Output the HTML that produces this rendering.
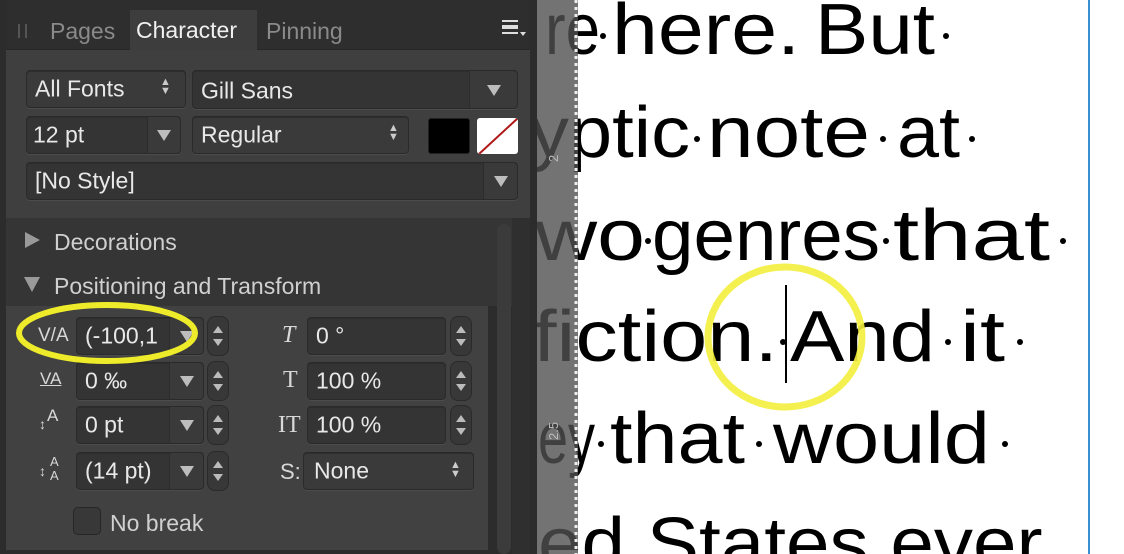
<!DOCTYPE html>
<html><head><meta charset="utf-8"><style>
*{box-sizing:border-box;margin:0;padding:0}
body{width:1124px;height:554px;overflow:hidden;background:#fff;position:relative;font-family:"Liberation Sans",sans-serif}
.a{position:absolute}
.panel{left:0;top:0;width:537px;height:554px;background:#2c2c2c}
.fld{position:absolute;background:#343434;border:1px solid #2a2a2a;border-radius:4px;color:#e8e8e8;font-size:23px;box-shadow:inset 0 1px 0 #2d2d2d,0 1px 0 #4c4c4c}
.fld span{position:absolute;left:8px;top:50%;transform:translateY(-50%)}
.sep{position:absolute;top:0;bottom:0;border-left:1px solid #2c2c2c;background:#3a3a3a;border-radius:0 4px 4px 0;right:0}
.tri{position:absolute;width:0;height:0;border-left:7px solid transparent;border-right:7px solid transparent;border-top:11px solid #bdbdbd}
.stp{position:absolute;width:22px;height:40px;border:1px solid #2a2a2a;border-radius:8px;background:#383838}
.stp:before{content:"";position:absolute;left:5px;top:9px;border-left:5px solid transparent;border-right:5px solid transparent;border-bottom:7px solid #bbb}
.stp:after{content:"";position:absolute;left:5px;bottom:9px;border-left:5px solid transparent;border-right:5px solid transparent;border-top:7px solid #bbb}
.ud{position:absolute;color:#ccc;font-size:11px;line-height:9px;text-align:center}
.lbl{position:absolute;color:#d0d0d0;font-size:23px}
.ic{position:absolute;color:#d8d8d8;font-family:"Liberation Serif",serif}
</style></head><body>
<svg class="a" style="left:0;top:0" width="1124" height="554">
<g font-family="Liberation Sans" font-size="72" fill="#000">
<text x="545" y="54" textLength="55" lengthAdjust="spacingAndGlyphs">re</text>
<text x="612" y="54" textLength="188" lengthAdjust="spacingAndGlyphs">here.</text>
<text x="815" y="54" textLength="120" lengthAdjust="spacingAndGlyphs">But</text>
<text x="530" y="157" textLength="160" lengthAdjust="spacingAndGlyphs">yptic</text>
<text x="707" y="157" textLength="163" lengthAdjust="spacingAndGlyphs">note</text>
<text x="897" y="157" textLength="63" lengthAdjust="spacingAndGlyphs">at</text>
<text x="535" y="260" textLength="110" lengthAdjust="spacingAndGlyphs">wo</text>
<text x="652" y="260" textLength="228" lengthAdjust="spacingAndGlyphs">genres</text>
<text x="893" y="260" textLength="157" lengthAdjust="spacingAndGlyphs">that</text>
<text x="533" y="361" textLength="245" lengthAdjust="spacingAndGlyphs">fiction.</text>
<text x="790" y="361" textLength="145" lengthAdjust="spacingAndGlyphs">And</text>
<text x="960" y="361" textLength="45" lengthAdjust="spacingAndGlyphs">it</text>
<text x="538" y="463" textLength="57" lengthAdjust="spacingAndGlyphs">ey</text>
<text x="610" y="463" textLength="135" lengthAdjust="spacingAndGlyphs">that</text>
<text x="773" y="463" textLength="217" lengthAdjust="spacingAndGlyphs">would</text>
<text x="538" y="568" textLength="522" lengthAdjust="spacingAndGlyphs">ed.States.ever.</text>
</g>
<g fill="#000"><circle cx="603" cy="36" r="3"/><circle cx="946" cy="36" r="3"/><circle cx="697" cy="139" r="3"/><circle cx="883" cy="139" r="3"/><circle cx="972" cy="139" r="3"/><circle cx="648" cy="241" r="3"/><circle cx="886" cy="241" r="3"/><circle cx="1063" cy="241" r="3"/><circle cx="783" cy="342" r="3"/><circle cx="948" cy="342" r="3"/><circle cx="1020" cy="342" r="3"/><circle cx="601" cy="444" r="3"/><circle cx="759" cy="444" r="3"/><circle cx="1005" cy="444" r="3"/></g>
<rect x="785" y="285" width="2" height="98" fill="#000"/>
<ellipse cx="785" cy="337" rx="77" ry="70" fill="none" stroke="#f2ee3c" stroke-width="7" opacity=".9"/>
<rect x="1088" y="0" width="2" height="554" fill="#3a8fd0"/>
<rect x="537" y="0" width="41" height="554" fill="rgba(80,80,80,.8)"/>
<line x1="576" y1="0" x2="576" y2="554" stroke="#eee" stroke-width="3" stroke-dasharray="3 4"/>
<text x="558" y="162" font-size="13" fill="#bbb" transform="rotate(-90 558 162)">2</text>
<text x="558" y="440" font-size="13" fill="#bbb" transform="rotate(-90 558 440)">2.5</text>
</svg>
<div class="a panel">
 <div class="a" style="left:6px;top:0;width:524px;height:50px;background:#2e2e2e;border-bottom:1px solid #262626"></div>
 <div class="a" style="left:18px;top:24px;width:2px;height:14px;background:#555"></div>
 <div class="a" style="left:25px;top:24px;width:2px;height:14px;background:#555"></div>
 <div class="a" style="left:130px;top:10px;width:127px;height:41px;background:#3d3d3d"></div>
 <div class="lbl" style="left:50px;top:18px;color:#8a8a8a">Pages</div>
 <div class="lbl" style="left:136px;top:17px;color:#f0f0f0">Character</div>
 <div class="lbl" style="left:266px;top:18px;color:#8a8a8a">Pinning</div>
 <div class="a" style="left:502px;top:20px;width:16px;height:14px;border-top:2px solid #ddd;border-bottom:2px solid #ddd"></div>
 <div class="a" style="left:502px;top:25px;width:16px;height:4px;border-top:2px solid #ddd;border-bottom:2px solid #ddd"></div>
 <div class="a" style="left:520px;top:32px;border-left:3px solid transparent;border-right:3px solid transparent;border-top:4px solid #ddd"></div>
 <div class="a" style="left:6px;top:50px;width:524px;height:168px;background:#3f3f3f"></div>
 <div class="fld" style="left:26px;top:70px;width:160px;height:38px;background:#3a3a3a"><span>All Fonts</span></div>
 <div class="ud" style="left:160px;top:78px">▲<br>▼</div>
 <div class="fld" style="left:192px;top:70px;width:326px;height:39px"><span style="top:55%">Gill Sans</span><div class="sep" style="width:48px"><div class="tri" style="left:17px;top:14px"></div></div></div>
 <div class="fld" style="left:26px;top:116px;width:155px;height:38px"><span style="left:6px">12 pt</span><div class="sep" style="width:33px"><div class="tri" style="left:9px;top:13px"></div></div></div>
 <div class="fld" style="left:192px;top:116px;width:217px;height:38px;background:#3a3a3a"><span>Regular</span></div>
 <div class="ud" style="left:388px;top:124px">▲<br>▼</div>
 <div class="a" style="left:428px;top:118px;width:42px;height:36px;background:#000;border:1px solid #222;border-radius:3px"></div>
 <div class="a" style="left:477px;top:118px;width:41px;height:36px;border-radius:3px;overflow:hidden;background:#fff"><svg width="41" height="36"><line x1="2" y1="36" x2="41" y2="0" stroke="#b01818" stroke-width="2"/></svg></div>
 <div class="fld" style="left:26px;top:162px;width:492px;height:38px"><span>[No Style]</span><div class="sep" style="width:34px"><div class="tri" style="left:10px;top:13px"></div></div></div>
 <div class="a" style="left:6px;top:218px;width:524px;height:88px;background:#353535"></div>
 <div class="a" style="left:25px;top:232px;border-top:8px solid transparent;border-bottom:8px solid transparent;border-left:15px solid #9a9a9a"></div>
 <div class="lbl" style="left:54px;top:229px">Decorations</div>
 <div class="a" style="left:24px;top:277px;border-left:8px solid transparent;border-right:8px solid transparent;border-top:15px solid #9a9a9a"></div>
 <div class="lbl" style="left:54px;top:273px">Positioning and Transform</div>
 <div class="a" style="left:6px;top:306px;width:482px;height:244px;background:#414141"></div>
 <div class="a" style="left:497px;top:224px;width:14px;height:330px;background:#3b3b3b;border-radius:7px"></div>
 <div class="a" style="left:512px;top:218px;width:18px;height:336px;background:#2f2f2f"></div>

 <div class="fld" style="left:76px;top:317px;width:128px;height:38px"><span>(-100,1</span><div class="sep" style="width:34px"><div class="tri" style="left:10px;top:13px"></div></div></div>
 <div class="stp" style="left:207px;top:316px"></div>
 <div class="fld" style="left:76px;top:362px;width:128px;height:38px"><span>0 ‰</span><div class="sep" style="width:34px"><div class="tri" style="left:10px;top:13px"></div></div></div>
 <div class="stp" style="left:207px;top:361px"></div>
 <div class="fld" style="left:76px;top:406px;width:128px;height:38px"><span>0 pt</span><div class="sep" style="width:34px"><div class="tri" style="left:10px;top:13px"></div></div></div>
 <div class="stp" style="left:207px;top:405px"></div>
 <div class="fld" style="left:76px;top:452px;width:128px;height:38px"><span>(14 pt)</span><div class="sep" style="width:34px"><div class="tri" style="left:10px;top:13px"></div></div></div>
 <div class="stp" style="left:207px;top:451px"></div>
 <div class="fld" style="left:307px;top:317px;width:139px;height:38px"><span>0 °</span></div>
 <div class="stp" style="left:450px;top:316px"></div>
 <div class="fld" style="left:307px;top:362px;width:139px;height:38px"><span>100 %</span></div>
 <div class="stp" style="left:450px;top:361px"></div>
 <div class="fld" style="left:307px;top:406px;width:139px;height:38px"><span>100 %</span></div>
 <div class="stp" style="left:450px;top:405px"></div>
 <div class="fld" style="left:303px;top:452px;width:171px;height:38px;background:#3a3a3a"><span style="left:10px">None</span></div>
 <div class="ud" style="left:450px;top:461px">▲<br>▼</div>
 <div class="a" style="left:73px;top:507px;width:28px;height:28px;background:#383838;border:1px solid #262626;border-radius:5px"></div>
 <div class="lbl" style="left:110px;top:510px">No break</div>

 <div class="ic" style="left:38px;top:325px;font-family:'Liberation Sans';font-size:19px">V/A</div>
 <div class="ic" style="left:40px;top:369px;font-family:'Liberation Sans';font-size:17px;text-decoration:underline">VA</div>
 <div class="ic" style="left:47px;top:406px;font-family:'Liberation Sans';font-size:17px">A</div>
 <div class="ic" style="left:39px;top:418px;font-size:14px">↕</div>
 <div class="ic" style="left:50px;top:455px;font-family:'Liberation Sans';font-size:13px;line-height:14px">A<br>A</div>
 <div class="ic" style="left:39px;top:465px;font-size:14px">↕</div>
 <div class="ic" style="left:282px;top:322px;font-size:24px;font-style:italic">T</div>
 <div class="ic" style="left:283px;top:367px;font-size:24px">T</div>
 <div class="ic" style="left:278px;top:412px;font-size:24px">IT</div>
 <div class="ic" style="left:280px;top:459px;font-family:'Liberation Sans';font-size:22px">S:</div>
</div>
<svg class="a" style="left:0;top:295px" width="220" height="80"><ellipse cx="107" cy="38" rx="88" ry="28" fill="none" stroke="#eeec2a" stroke-width="6"/></svg>
</body></html>
